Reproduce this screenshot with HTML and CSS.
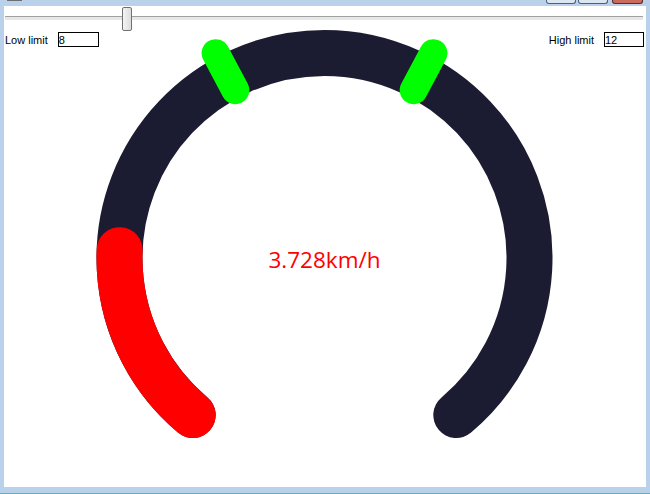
FILE: index.html
```html
<!DOCTYPE html>
<html>
<head>
<meta charset="utf-8">
<link rel="stylesheet" href="styles.css">
</head>
<body>
<div class="window">
  <div class="titlebar">
    <span class="app-icon"></span>
    <div class="caption-buttons">
      <span class="cap-btn"></span>
      <span class="cap-btn"></span>
      <span class="cap-btn close"></span>
    </div>
  </div>
  <div class="client">
    <svg class="gauge" width="642" height="481" viewBox="0 0 642 481">
      <path class="arc-bg" d="M188.7 409 A205 205 0 1 1 452.3 409"/>
      <path class="arc-val" d="M188.7 409 A205 205 0 0 1 115.65 244.17"/>
      <line class="marker" x1="211.6" y1="47.2" x2="231.3" y2="84.2"/>
      <line class="marker" x1="429.4" y1="47.2" x2="409.7" y2="84.2"/>
      <text class="speed" x="320.5" y="262" text-anchor="middle">3.728km/h</text>
    </svg>
    <div class="slider">
      <div class="track"></div>
      <div class="thumb"></div>
    </div>
    <div class="limits">
      <label class="limit">Low limit <input class="limit-input" type="text" value="8"></label>
      <label class="limit">High limit <input class="limit-input high" type="text" value="12"></label>
    </div>
  </div>
  <div class="bottom-edge"></div>
</div>
</body>
</html>
```
FILE: styles.css
```css
html, body {
  margin: 0;
  padding: 0;
}
body {
  background: #b9d1ea;
  font-family: "Liberation Sans", Arial, sans-serif;
  font-size: 11px;
  color: #000;
}
.window {
  width: 650px;
  height: 494px;
  display: flex;
  flex-direction: column;
  overflow: hidden;
}
.titlebar {
  height: 6px;
  display: flex;
  align-items: flex-start;
}
.app-icon {
  width: 15px;
  height: 1px;
  margin-left: 7px;
  background: #6d6d70;
}
.caption-buttons {
  margin-left: auto;
  margin-right: 7px;
  display: flex;
  gap: 2px;
}
.cap-btn {
  width: 30px;
  height: 4px;
  box-sizing: border-box;
  border: 1px solid #4f5f78;
  border-top: none;
  border-radius: 0 0 3px 3px;
  background: #dce6f3;
}
.cap-btn.close {
  width: 31px;
  margin-left: 2px;
  border-color: #5a2c2c;
  background: #c96a5a;
}
.client {
  position: relative;
  height: 481px;
  margin: 0 4px;
  background: #fff;
}
.gauge {
  position: absolute;
  left: 0;
  top: 0;
}
.arc-bg {
  fill: none;
  stroke: #1b1b32;
  stroke-width: 46;
  stroke-linecap: round;
}
.arc-val {
  fill: none;
  stroke: #ff0000;
  stroke-width: 46;
  stroke-linecap: round;
}
.marker {
  stroke: #00ff00;
  stroke-width: 28;
  stroke-linecap: round;
}
.speed {
  fill: #ff0000;
  font-family: "Open Sans", "Noto Sans", sans-serif;
  font-size: 22.5px;
}
.slider {
  position: relative;
  height: 25px;
  padding: 10px 3px 0 1px;
  box-sizing: border-box;
}
.track {
  height: 3px;
  border-top: 1px solid #a0a0a0;
  background: #e6e7e8;
}
.thumb {
  position: absolute;
  left: 118px;
  top: 1px;
  width: 10px;
  height: 24px;
  box-sizing: border-box;
  border: 1px solid #707070;
  border-radius: 2px;
  background: linear-gradient(to right, #f4f4f4, #dcdcdc);
}
.limits {
  position: relative;
  margin-top: 1px;
  display: flex;
  justify-content: space-between;
  align-items: center;
  padding: 0 2px 0 1px;
}
.limit {
  display: flex;
  align-items: center;
  gap: 10px;
}
.limit-input {
  width: 41px;
  height: 15px;
  box-sizing: border-box;
  border: 1px solid #000;
  padding: 0;
  margin: 0;
  font-family: "Liberation Sans", Arial, sans-serif;
  font-size: 11px;
  color: #000;
  background: #fff;
  outline: none;
}
.limit-input.high {
  width: 40px;
}
.bottom-edge {
  height: 7px;
  box-sizing: border-box;
  border-bottom: 1px solid #3cc0d4;
}
```
